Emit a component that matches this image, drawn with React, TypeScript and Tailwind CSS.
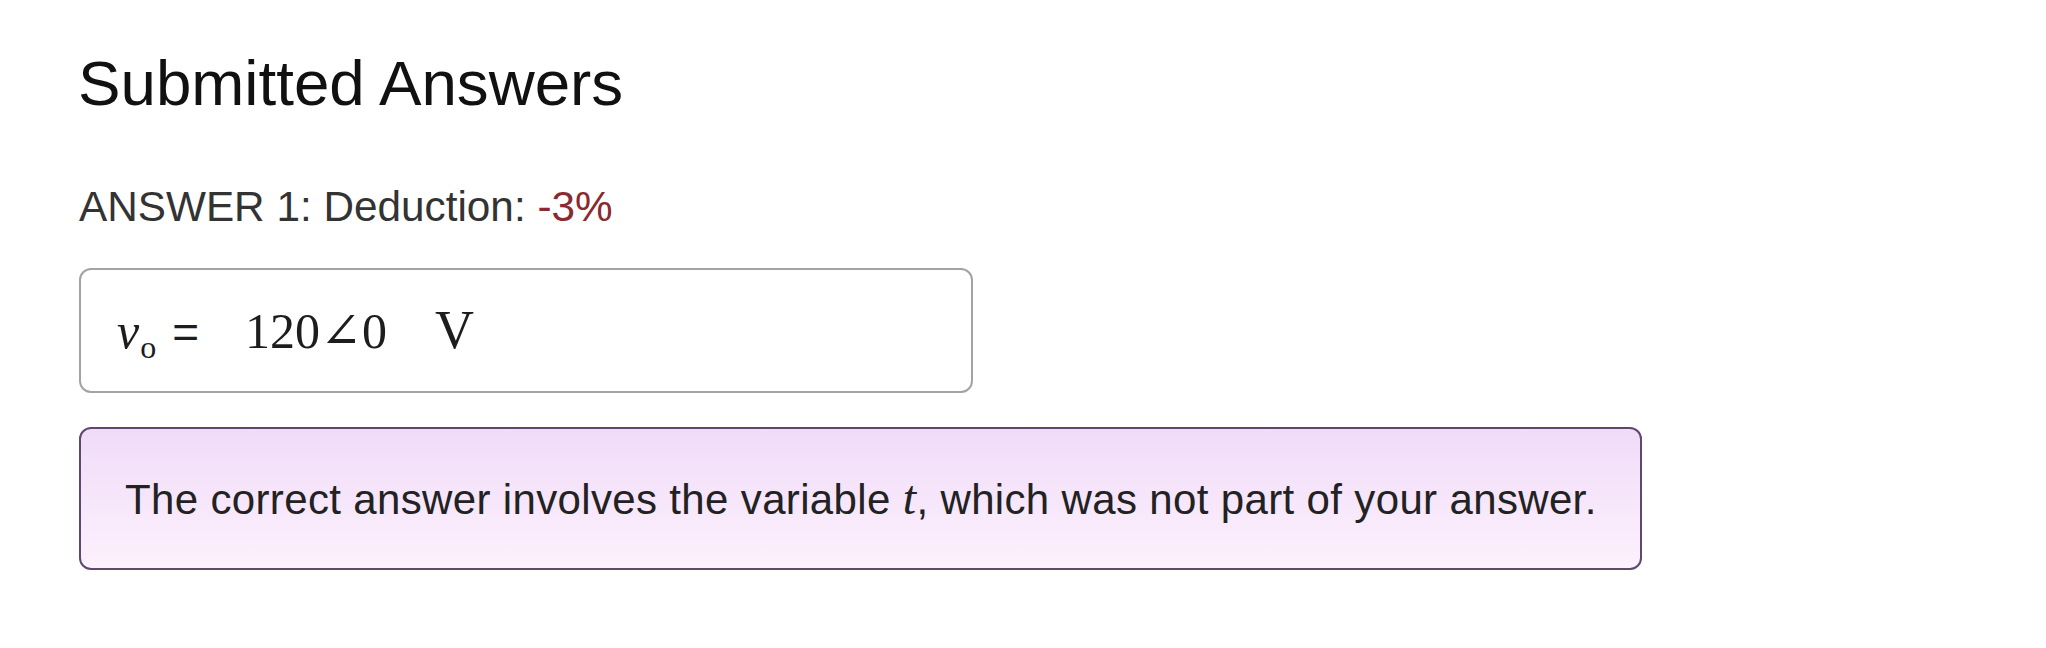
import React from "react";

const sans = { fontFamily: '"Liberation Sans", Arial, sans-serif' };
const serif = { fontFamily: '"Liberation Serif", "Times New Roman", "DejaVu Serif", serif' };

function MathAnswer() {
  return (
    <div className="flex items-baseline text-[#1d1d1d] text-[50px] leading-[50px]" style={serif}>
      <span className="italic">v</span>
      <span className="text-[32px] leading-none relative top-[10px] ml-[1px]">o</span>
      <span className="ml-[16px] text-[46px]" style={sans}>=</span>
      <span className="ml-[46px]">120∠0</span>
      <span className="ml-[48px] text-[54px]">V</span>
    </div>
  );
}

export default function App() {
  return (
    <div className="min-h-screen bg-white pl-[79px] pt-[51px]" style={sans}>
      <h2 className="text-[63.7px] leading-[63px] text-[#111] font-normal -ml-[1px]">Submitted Answers</h2>

      <div className="mt-[72px] text-[42.3px] leading-[42px] text-[#333]">
        ANSWER 1: Deduction: <span className="text-[#8a2a2e]">-3%</span>
      </div>

      <div className="mt-[40px] w-[894px] h-[125px] rounded-[12px] border-2 border-[#a3a3a3] bg-white flex items-center pl-[36px]">
        <MathAnswer />
      </div>

      <div className="mt-[34px] w-[1563px] h-[143px] rounded-[12px] border-2 border-[#5d4870] bg-gradient-to-b from-[#f0dbf8] to-[#fdf1fd] flex items-center pl-[44px]">
        <p className="text-[42px] leading-[42px] tracking-[0.35px] text-[#222]">
          The correct answer involves the variable{" "}
          <span className="italic text-[48px]" style={serif}>t</span>, which was not part of your answer.
        </p>
      </div>
    </div>
  );
}
